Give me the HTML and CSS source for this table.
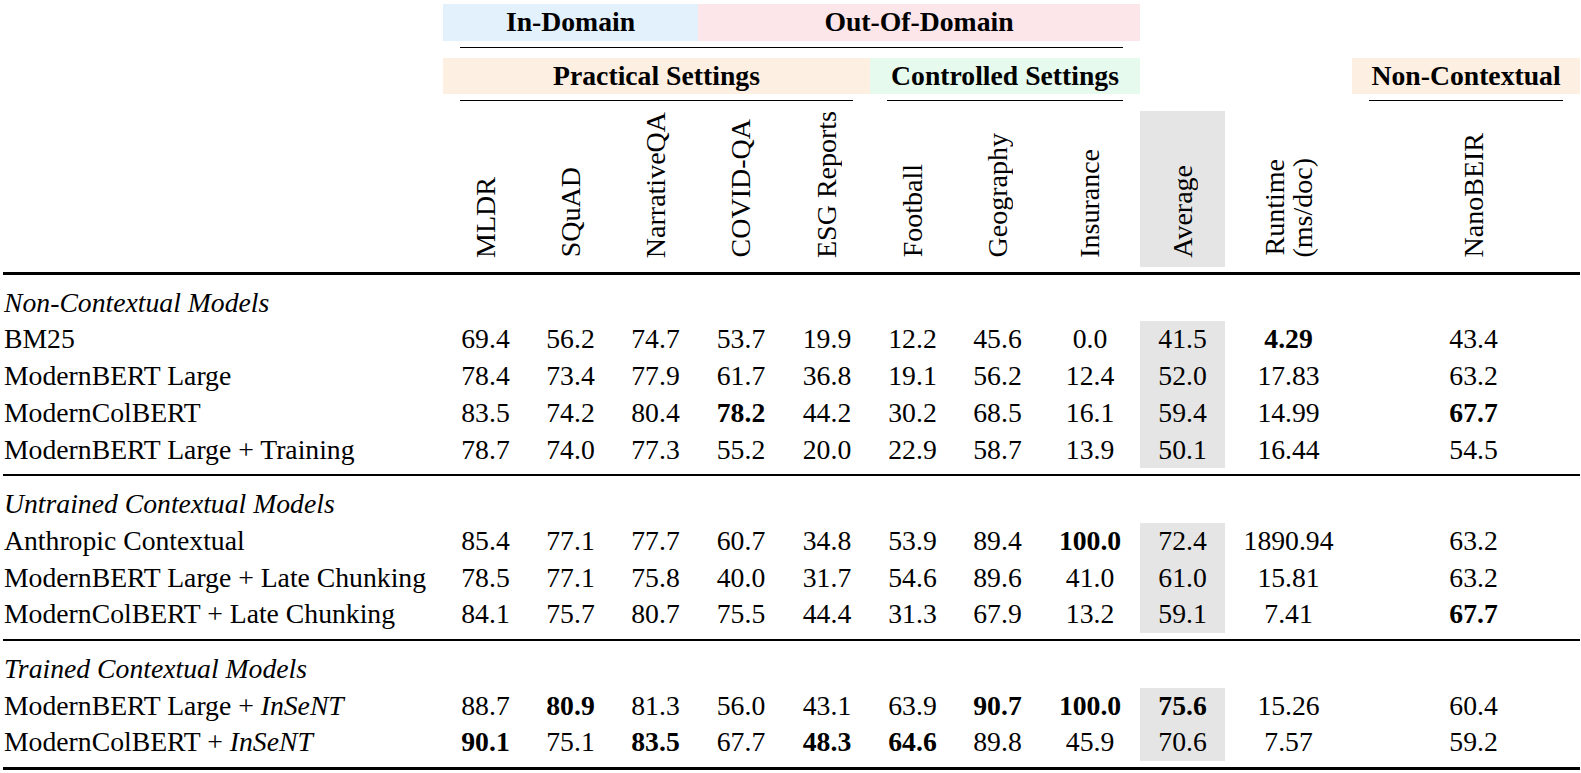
FILE: index.html
```html
<!DOCTYPE html>
<html lang="en">
<head>
<meta charset="utf-8">
<title>Results table</title>
<link rel="stylesheet" href="styles.css">
</head>
<body>
<table class="results">
  <colgroup>
    <col class="c-label">
    <col class="c-std"><col class="c-std"><col class="c-std">
    <col class="c-wide"><col class="c-wide">
    <col class="c-std"><col class="c-std"><col class="c-ins">
    <col class="c-std">
    <col class="c-run">
    <col class="c-nano">
  </colgroup>
  <thead>
    <tr class="grp">
      <td></td>
      <th colspan="3" class="bg-blue">In-Domain</th>
      <th colspan="5" class="bg-pink">Out-Of-Domain</th>
      <td colspan="3"></td>
    </tr>
    <tr class="cm cm1">
      <td></td>
      <td colspan="8"><div class="cmid"></div></td>
      <td colspan="3"></td>
    </tr>
    <tr class="grp">
      <td></td>
      <th colspan="5" class="bg-peach">Practical Settings</th>
      <th colspan="3" class="bg-green">Controlled Settings</th>
      <td colspan="2"></td>
      <th class="bg-peach">Non-Contextual</th>
    </tr>
    <tr class="cm cm2">
      <td></td>
      <td colspan="5"><div class="cmid"></div></td>
      <td colspan="3"><div class="cmid"></div></td>
      <td colspan="2"></td>
      <td><div class="cmid"></div></td>
    </tr>
    <tr class="names">
      <td></td>
      <th><div class="vh"><span>MLDR</span></div></th>
      <th><div class="vh"><span>SQuAD</span></div></th>
      <th><div class="vh"><span>NarrativeQA</span></div></th>
      <th><div class="vh"><span>COVID-QA</span></div></th>
      <th><div class="vh"><span>ESG Reports</span></div></th>
      <th><div class="vh"><span>Football</span></div></th>
      <th><div class="vh"><span>Geography</span></div></th>
      <th><div class="vh"><span>Insurance</span></div></th>
      <th class="avg"><div class="vh"><span>Average</span></div></th>
      <th><div class="vh"><span>Runtime<br>(ms/doc)</span></div></th>
      <th class="nano"><div class="vh"><span>NanoBEIR</span></div></th>
    </tr>
  </thead>
  <tbody class="sec sec-first">
    <tr class="cat"><td colspan="12">Non-Contextual Models</td></tr>
    <tr><td class="lbl">BM25</td><td>69.4</td><td>56.2</td><td>74.7</td><td>53.7</td><td>19.9</td><td>12.2</td><td>45.6</td><td>0.0</td><td class="avg">41.5</td><td><b>4.29</b></td><td class="nano">43.4</td></tr>
    <tr><td class="lbl">ModernBERT Large</td><td>78.4</td><td>73.4</td><td>77.9</td><td>61.7</td><td>36.8</td><td>19.1</td><td>56.2</td><td>12.4</td><td class="avg">52.0</td><td>17.83</td><td class="nano">63.2</td></tr>
    <tr><td class="lbl">ModernColBERT</td><td>83.5</td><td>74.2</td><td>80.4</td><td><b>78.2</b></td><td>44.2</td><td>30.2</td><td>68.5</td><td>16.1</td><td class="avg">59.4</td><td>14.99</td><td class="nano"><b>67.7</b></td></tr>
    <tr><td class="lbl">ModernBERT Large + Training</td><td>78.7</td><td>74.0</td><td>77.3</td><td>55.2</td><td>20.0</td><td>22.9</td><td>58.7</td><td>13.9</td><td class="avg">50.1</td><td>16.44</td><td class="nano">54.5</td></tr>
  </tbody>
  <tbody class="sec">
    <tr class="cat"><td colspan="12">Untrained Contextual Models</td></tr>
    <tr><td class="lbl">Anthropic Contextual</td><td>85.4</td><td>77.1</td><td>77.7</td><td>60.7</td><td>34.8</td><td>53.9</td><td>89.4</td><td><b>100.0</b></td><td class="avg">72.4</td><td>1890.94</td><td class="nano">63.2</td></tr>
    <tr><td class="lbl">ModernBERT Large + Late Chunking</td><td>78.5</td><td>77.1</td><td>75.8</td><td>40.0</td><td>31.7</td><td>54.6</td><td>89.6</td><td>41.0</td><td class="avg">61.0</td><td>15.81</td><td class="nano">63.2</td></tr>
    <tr><td class="lbl">ModernColBERT + Late Chunking</td><td>84.1</td><td>75.7</td><td>80.7</td><td>75.5</td><td>44.4</td><td>31.3</td><td>67.9</td><td>13.2</td><td class="avg">59.1</td><td>7.41</td><td class="nano"><b>67.7</b></td></tr>
  </tbody>
  <tbody class="sec sec-last">
    <tr class="cat"><td colspan="12">Trained Contextual Models</td></tr>
    <tr><td class="lbl">ModernBERT Large + <i>InSeNT</i></td><td>88.7</td><td><b>80.9</b></td><td>81.3</td><td>56.0</td><td>43.1</td><td>63.9</td><td><b>90.7</b></td><td><b>100.0</b></td><td class="avg"><b>75.6</b></td><td>15.26</td><td class="nano">60.4</td></tr>
    <tr><td class="lbl">ModernColBERT + <i>InSeNT</i></td><td><b>90.1</b></td><td>75.1</td><td><b>83.5</b></td><td>67.7</td><td><b>48.3</b></td><td><b>64.6</b></td><td>89.8</td><td>45.9</td><td class="avg">70.6</td><td>7.57</td><td class="nano">59.2</td></tr>
  </tbody>
</table>
</body>
</html>
```

FILE: styles.css
```css
html { background: #ffffff; }

body {
  margin: 0;
  padding: 4px 0 0 3px;
  font-family: "Liberation Serif", "Times New Roman", serif;
  font-size: 27.7px;
  color: #000;
}

.results {
  border-collapse: separate;
  border-spacing: 0;
  table-layout: fixed;
  width: 1577px;
  font-family: inherit;
}

.results td,
.results th {
  padding: 0;
  font-family: inherit;
  font-weight: normal;
  text-align: center;
  vertical-align: middle;
  white-space: nowrap;
}

.c-label { width: 440px; }
.c-std { width: 85px; }
.c-wide { width: 86px; }
.c-ins { width: 100px; }
.c-run { width: 127px; }
.c-nano { width: 228px; }

/* group header rows */
.grp th {
  font-weight: bold;
  line-height: 36.7px;
}
.bg-blue { background: #e3f1fd; }
.bg-pink { background: #fde6ea; }
.bg-peach { background: #fdefe1; }
.bg-green { background: #e6fbee; }

/* trimmed cmidrules */
.cm1 td { padding: 6px 0 10px; }
.cm2 td { padding: 5.3px 0 10px; }
.cmid {
  margin: 0 17px;
  border-top: 1px solid #000;
}

/* rotated column names */
.names th { padding-bottom: 5px; }
.vh {
  height: 156px;
  box-sizing: border-box;
  padding-bottom: 9px;
  display: flex;
  align-items: flex-end;
  justify-content: center;
}
.vh span {
  writing-mode: vertical-rl;
  transform: rotate(180deg);
  font-size: 28px;
  line-height: 28px;
  white-space: nowrap;
}

/* body */
.results tbody td { line-height: 36.7px; }
.results td.lbl { text-align: left; padding-left: 1px; }
.cat td {
  text-align: left;
  font-style: italic;
  padding-left: 1px;
  padding-top: 10px;
  border-top: 2px solid #000;
}
.sec-first .cat td { border-top-width: 3px; }
.sec tr:last-child td { padding-bottom: 6px; }
.sec-last tr:last-child td { border-bottom: 3px solid #000; }

.avg {
  background: #e5e5e5;
  background-clip: content-box;
}
.names th.avg .vh { background: #e5e5e5; }
.names th.avg { background: none; }

.nano { padding-left: 15px !important; }
```
